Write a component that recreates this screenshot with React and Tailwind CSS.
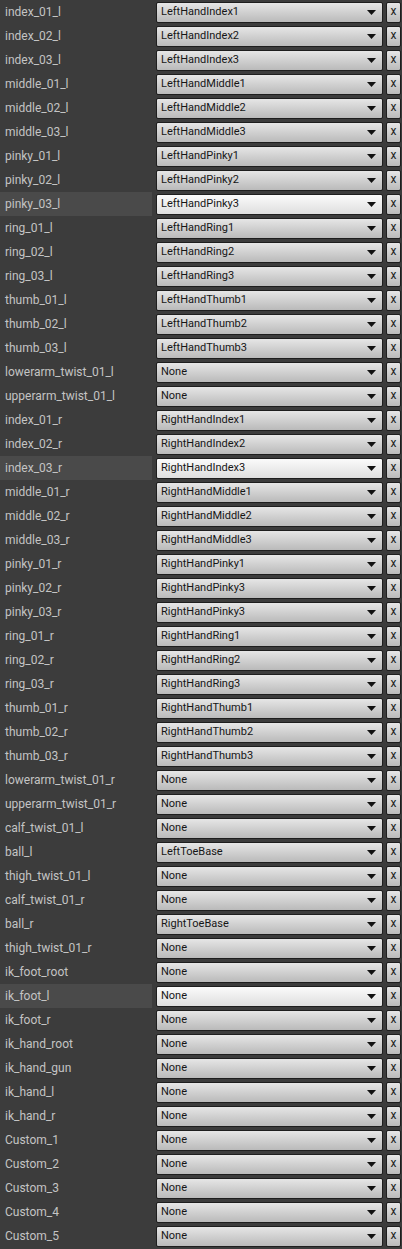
const rows = [
  ["index_01_l", "LeftHandIndex1"],
  ["index_02_l", "LeftHandIndex2"],
  ["index_03_l", "LeftHandIndex3"],
  ["middle_01_l", "LeftHandMiddle1"],
  ["middle_02_l", "LeftHandMiddle2"],
  ["middle_03_l", "LeftHandMiddle3"],
  ["pinky_01_l", "LeftHandPinky1"],
  ["pinky_02_l", "LeftHandPinky2"],
  ["pinky_03_l", "LeftHandPinky3", true],
  ["ring_01_l", "LeftHandRing1"],
  ["ring_02_l", "LeftHandRing2"],
  ["ring_03_l", "LeftHandRing3"],
  ["thumb_01_l", "LeftHandThumb1"],
  ["thumb_02_l", "LeftHandThumb2"],
  ["thumb_03_l", "LeftHandThumb3"],
  ["lowerarm_twist_01_l", "None"],
  ["upperarm_twist_01_l", "None"],
  ["index_01_r", "RightHandIndex1"],
  ["index_02_r", "RightHandIndex2"],
  ["index_03_r", "RightHandIndex3", true],
  ["middle_01_r", "RightHandMiddle1"],
  ["middle_02_r", "RightHandMiddle2"],
  ["middle_03_r", "RightHandMiddle3"],
  ["pinky_01_r", "RightHandPinky1"],
  ["pinky_02_r", "RightHandPinky3"],
  ["pinky_03_r", "RightHandPinky3"],
  ["ring_01_r", "RightHandRing1"],
  ["ring_02_r", "RightHandRing2"],
  ["ring_03_r", "RightHandRing3"],
  ["thumb_01_r", "RightHandThumb1"],
  ["thumb_02_r", "RightHandThumb2"],
  ["thumb_03_r", "RightHandThumb3"],
  ["lowerarm_twist_01_r", "None"],
  ["upperarm_twist_01_r", "None"],
  ["calf_twist_01_l", "None"],
  ["ball_l", "LeftToeBase"],
  ["thigh_twist_01_l", "None"],
  ["calf_twist_01_r", "None"],
  ["ball_r", "RightToeBase"],
  ["thigh_twist_01_r", "None"],
  ["ik_foot_root", "None"],
  ["ik_foot_l", "None", true],
  ["ik_foot_r", "None"],
  ["ik_hand_root", "None"],
  ["ik_hand_gun", "None"],
  ["ik_hand_l", "None"],
  ["ik_hand_r", "None"],
  ["Custom_1", "None"],
  ["Custom_2", "None"],
  ["Custom_3", "None"],
  ["Custom_4", "None"],
  ["Custom_5", "None"],
];

function BoneRow({ bone, target, hover }) {
  return (
    <div className="flex h-[24px] items-center">
      <div
        className={
          "flex h-full w-[152px] items-center pl-[5px] text-[12px] text-[#c4c4c4] " +
          (hover ? "bg-[#4a4a4a]" : "")
        }
      >
        {bone}
      </div>
      <div
        className={
          "ml-[4px] flex h-[21px] w-[227px] items-center justify-between rounded-[2px] border border-[#1e1e1e] pl-[4px] pr-[6px] text-[11px] text-[#161616] " +
          (hover
            ? "bg-gradient-to-b from-[#fbfbfb] to-[#dedede]"
            : "bg-gradient-to-b from-[#e6e6e6] to-[#bababa]")
        }
      >
        <span>{target}</span>
        <svg width="9" height="5" viewBox="0 0 9 5">
          <path d="M0 0 L9 0 L4.5 5 Z" fill="#111" />
        </svg>
      </div>
      <div className="ml-[3px] flex h-[21px] w-[15px] items-center justify-center rounded-[2px] border border-[#1e1e1e] bg-gradient-to-b from-[#e6e6e6] to-[#bababa] pb-[2px] text-[12px] text-[#222]">
        x
      </div>
    </div>
  );
}

export default function App() {
  return (
    <div
      className="min-h-[1249px] w-[402px] bg-[#3c3c3c]"
      style={{ fontFamily: "Roboto, 'Liberation Sans', sans-serif" }}
    >
      {rows.map(([bone, target, hover]) => (
        <BoneRow key={bone} bone={bone} target={target} hover={hover} />
      ))}
    </div>
  );
}
